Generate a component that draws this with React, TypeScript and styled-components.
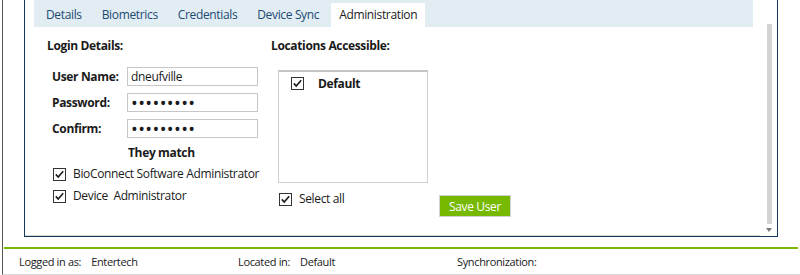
import React from "react";
import styled, { createGlobalStyle } from "styled-components";

const GlobalStyle = createGlobalStyle`
  html, body { margin: 0; padding: 0; background: #fff; }
  body {
    font-family: "Open Sans", "Noto Sans", "Liberation Sans", sans-serif;
    font-size: 12px;
    letter-spacing: -0.35px;
    color: #1a1a1a;
  }
  * { box-sizing: border-box; }
`;

const TABS = ["Details", "Biometrics", "Credentials", "Device Sync", "Administration"];

const Check = () => (
  <svg width="13" height="13" viewBox="0 0 13 13">
    <rect x="0.5" y="0.5" width="12" height="12" fill="#fff" stroke="#333" />
    <path d="M2.8 6.4 L5.2 9 L10.2 3.2" fill="none" stroke="#1a1a1a" strokeWidth="1.6" />
  </svg>
);

export default function App() {
  return (
    <>
      <GlobalStyle />
      <Frame>
        <Panel>
          <Content>
            <TabStrip>
              {TABS.map((t) => (
                <Tab key={t} active={t === "Administration"}>{t}</Tab>
              ))}
            </TabStrip>
            <Body>
              <LeftCol>
                <Heading>Login Details:</Heading>
                <Form>
                  <Label>User Name:</Label>
                  <Field readOnly value="dneufville" />
                  <Label>Password:</Label>
                  <Field readOnly type="password" value="passwords" secret />
                  <Label>Confirm:</Label>
                  <Field readOnly type="password" value="passwords" secret />
                </Form>
                <Match>They match</Match>
                <Checks>
                  <CheckItem><Check /><span>BioConnect Software Administrator</span></CheckItem>
                  <CheckItem><Check /><span>Device&nbsp; Administrator</span></CheckItem>
                </Checks>
              </LeftCol>
              <RightCol>
                <Heading>Locations Accessible:</Heading>
                <LocGrid>
                  <ListBox>
                    <ListRow><Check /><strong>Default</strong></ListRow>
                  </ListBox>
                  <span />
                  <SelectAll><Check /><span>Select all</span></SelectAll>
                  <SaveButton>Save User</SaveButton>
                </LocGrid>
              </RightCol>
            </Body>
          </Content>
          <ScrollCol>
            <Track />
            <Arrow />
          </ScrollCol>
        </Panel>
        <GreenRule />
        <StatusBar>
          <StatusItem><span>Logged in as:</span><span>Entertech</span></StatusItem>
          <StatusItem><span>Located in:</span><span>Default</span></StatusItem>
          <StatusItem><span>Synchronization:</span><span></span></StatusItem>
        </StatusBar>
      </Frame>
    </>
  );
}

const Frame = styled.div`
  margin-left: 2px;
  height: 275px;
  border-left: 1px solid #555;
  border-bottom: 1px solid #d6d6d6;
  display: flex;
  flex-direction: column;
  overflow: hidden;
`;
const Panel = styled.div`
  margin: 0 22px 0 21px;
  height: 237px;
  border: 1px solid #14395a;
  border-top: none;
  display: flex;
`;
const Content = styled.div`
  flex: 1;
  border-bottom: 1px solid #d3d3d3;
  display: flex;
  flex-direction: column;
`;
const TabStrip = styled.div`
  margin: 0 7px 0 9px;
  height: 27px;
  padding: 3px 0 0 4px;
  background: #e1ecf3;
  display: flex;
  gap: 4px;
`;
const Tab = styled.div<{ active?: boolean }>`
  height: 24px;
  line-height: 24px;
  padding: 0 8px;
  background: ${({ active }) => (active ? "#fff" : "transparent")};
  color: ${({ active }) => (active ? "#1a1a1a" : "#1d4a72")};
`;
const Body = styled.div`
  padding: 11px 0 0 22px;
  display: flex;
`;
const LeftCol = styled.div`
  width: 224px;
  display: flex;
  flex-direction: column;
`;
const RightCol = styled.div`
  display: flex;
  flex-direction: column;
`;
const Heading = styled.div`
  font-weight: 700;
  line-height: 16px;
  height: 16px;
`;
const Form = styled.div`
  margin-top: 13px;
  display: grid;
  grid-template-columns: 80px 131px;
  grid-auto-rows: 19px;
  row-gap: 7px;
  align-items: center;
`;
const Label = styled.label`
  padding-left: 5px;
  font-weight: 700;
`;
const Field = styled.input<{ secret?: boolean }>`
  height: 19px;
  width: 131px;
  border: 1px solid #c6c6c6;
  padding: 0 3px;
  outline: none;
  font-family: inherit;
  font-size: ${({ secret }) => (secret ? "18px" : "12px")};
  letter-spacing: ${({ secret }) => (secret ? "0.4px" : "-0.35px")};
  color: #1a1a1a;
`;
const Match = styled.div`
  margin-top: 7px;
  padding-left: 81px;
  font-weight: 700;
  line-height: 16px;
`;
const Checks = styled.div`
  margin-top: 5px;
  padding-left: 6px;
  display: flex;
  flex-direction: column;
  gap: 6px;
`;
const CheckItem = styled.div`
  display: flex;
  align-items: center;
  gap: 7px;
  line-height: 16px;
  white-space: nowrap;
`;
const LocGrid = styled.div`
  margin: 16px 0 0 7px;
  display: grid;
  grid-template-columns: 161px auto;
  align-items: start;
`;
const ListBox = styled.div`
  width: 150px;
  height: 113px;
  border: 1px solid #cfcfcf;
  border-top: 2px solid #c4c4c4;
  padding: 5px 0 0 12px;
`;
const ListRow = styled.div`
  display: flex;
  align-items: center;
  gap: 14px;
  line-height: 13px;
`;
const SelectAll = styled(CheckItem)`
  margin: 8px 0 0 1px;
`;
const SaveButton = styled.button`
  margin-top: 12px;
  width: 72px;
  height: 22px;
  background: #76b900;
  border: 1px solid #d2d2d2;
  color: #fff;
  font-family: inherit;
  font-size: 12px;
  letter-spacing: -0.35px;
  padding: 0;
`;
const ScrollCol = styled.div`
  width: 17px;
  display: flex;
  flex-direction: column;
  align-items: flex-start;
  padding: 24px 0 0 7px;
`;
const Track = styled.div`
  width: 5px;
  height: 200px;
  background: #d4d4d4;
`;
const Arrow = styled.div`
  margin: 4px 0 0 -1px;
  width: 0;
  height: 0;
  border-left: 3.5px solid transparent;
  border-right: 3.5px solid transparent;
  border-top: 4px solid #7a7a7a;
`;
const GreenRule = styled.div`
  margin: 10px 2px 0 1px;
  height: 2px;
  background: #7ab800;
`;
const StatusBar = styled.div`
  height: 24px;
  padding-left: 16px;
  display: flex;
  align-items: center;
  font-size: 11px;
`;
const StatusItem = styled.div`
  width: 219px;
  display: flex;
  gap: 10px;
`;
